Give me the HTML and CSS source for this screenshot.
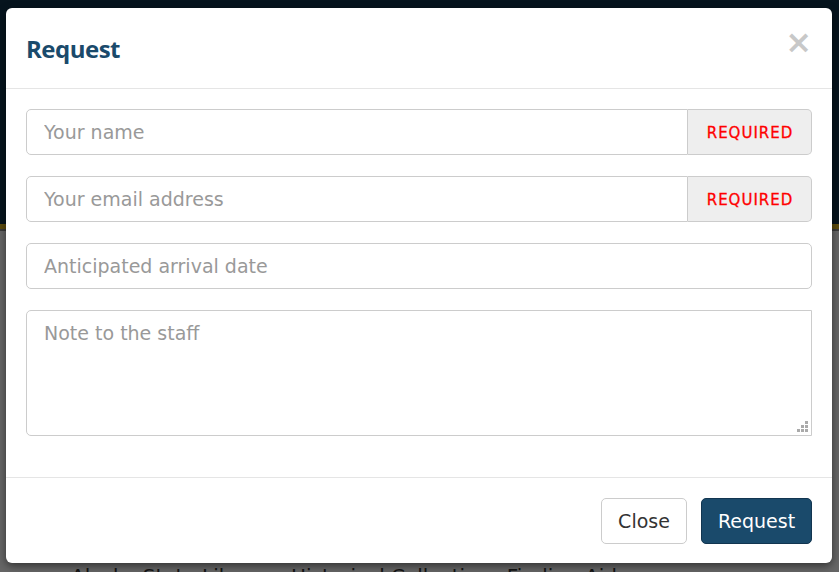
FILE: index.html
```html
<!DOCTYPE html>
<html lang="en">
<head>
<meta charset="utf-8">
<title>Request</title>
<link rel="stylesheet" href="styles.css">
</head>
<body>
<div class="page">
  <div class="page-header"></div>
  <div class="page-band"></div>
  <div class="page-content">
    <div class="page-title">Alaska State Library &nbsp; Historical Collections Finding Aids</div>
  </div>
</div>

<div class="modal">
  <div class="modal-header">
    <h4 class="modal-title">Request</h4>
    <button class="close" type="button" aria-label="Close">&times;</button>
  </div>
  <div class="modal-body">
    <div class="input-group">
      <input class="form-control" type="text" placeholder="Your name">
      <span class="addon">REQUIRED</span>
    </div>
    <div class="input-group">
      <input class="form-control" type="email" placeholder="Your email address">
      <span class="addon">REQUIRED</span>
    </div>
    <div class="input-group">
      <input class="form-control" type="text" placeholder="Anticipated arrival date">
    </div>
    <div class="input-group textarea-wrap">
      <textarea class="form-control note" placeholder="Note to the staff"></textarea>
      <svg class="grip" width="12" height="12" viewBox="0 0 12 12" aria-hidden="true">
        <rect x="8" y="0" width="3" height="3" fill="#aaa"/>
        <rect x="4" y="4" width="3" height="3" fill="#aaa"/>
        <rect x="8" y="4" width="3" height="3" fill="#aaa"/>
        <rect x="0" y="8" width="3" height="3" fill="#aaa"/>
        <rect x="4" y="8" width="3" height="3" fill="#aaa"/>
        <rect x="8" y="8" width="3" height="3" fill="#aaa"/>
      </svg>
    </div>
  </div>
  <div class="modal-footer">
    <button class="btn btn-default" type="button">Close</button>
    <button class="btn btn-primary" type="button">Request</button>
  </div>
</div>
</body>
</html>
```

FILE: styles.css
```css
html, body {
  margin: 0;
  padding: 0;
  height: 100%;
  overflow: hidden;
}

body {
  font-family: "DejaVu Sans", Verdana, sans-serif;
  background: #666666;
}

.page {
  display: flex;
  flex-direction: column;
  height: 100%;
}

.page-header {
  height: 224px;
  background: #06141e;
}

.page-band {
  height: 5px;
  background: #5c4c0e;
  border-bottom: 2px solid #3a3a3a;
}

.page-content {
  flex: 1;
  background: #666666;
  position: relative;
}

.page-title {
  position: absolute;
  left: 71px;
  top: 333px;
  font-size: 20px;
  color: #141414;
  white-space: nowrap;
}

.modal {
  position: absolute;
  left: 6px;
  top: 8px;
  width: 826px;
  height: 555px;
  background: #ffffff;
  border-radius: 6px;
  box-shadow: 0 3px 9px rgba(0, 0, 0, 0.5);
  display: flex;
  flex-direction: column;
  box-sizing: border-box;
}

.modal-header {
  height: 81px;
  box-sizing: border-box;
  border-bottom: 1px solid #e5e5e5;
  display: flex;
  align-items: center;
  justify-content: space-between;
  padding: 0 20px 0 20px;
}

.modal-title {
  margin: 0;
  font-family: "Open Sans", sans-serif;
  font-weight: 700;
  font-size: 24px;
  letter-spacing: -0.5px;
  color: #1a4a6b;
  line-height: 1;
  padding-top: 2px;
}

.close {
  border: 0;
  background: transparent;
  padding: 0;
  margin: 0 0 12px 0;
  font-family: "DejaVu Sans", sans-serif;
  font-size: 32px;
  font-weight: 700;
  line-height: 1;
  color: #c8c8c8;
  cursor: pointer;
}

.modal-body {
  padding: 20px 20px 0 20px;
  flex: 1;
}

.input-group {
  display: flex;
  margin-bottom: 21px;
}

.form-control {
  flex: 1;
  height: 46px;
  box-sizing: border-box;
  border: 1px solid #cccccc;
  border-radius: 5px;
  padding: 0 17px;
  font-family: "DejaVu Sans", Verdana, sans-serif;
  font-size: 19px;
  color: #555555;
  background: #ffffff;
  outline: none;
  min-width: 0;
}

.form-control::placeholder {
  color: #999999;
}

.input-group .form-control:not(:last-child) {
  border-top-right-radius: 0;
  border-bottom-right-radius: 0;
}

.addon {
  width: 124px;
  height: 46px;
  box-sizing: border-box;
  border: 1px solid #cccccc;
  border-left: 0;
  border-radius: 0 5px 5px 0;
  background: #eeeeee;
  color: #ff0000;
  font-size: 15px;
  letter-spacing: 1px;
  display: flex;
  align-items: center;
  justify-content: center;
  padding-left: 1px;
  padding-top: 1px;
  -webkit-text-stroke: 0.3px #ff0000;
}

.textarea-wrap {
  position: relative;
}

.note {
  height: 126px;
  resize: none;
  padding: 10px 17px;
  line-height: 24px;
}

.grip {
  position: absolute;
  right: 3px;
  bottom: 3px;
}

.modal-footer {
  border-top: 1px solid #e5e5e5;
  padding: 20px 20px 19px 20px;
  display: flex;
  justify-content: flex-end;
  gap: 14px;
}

.btn {
  height: 46px;
  box-sizing: border-box;
  border-radius: 5px;
  font-family: "DejaVu Sans", Verdana, sans-serif;
  font-size: 19px;
  padding: 0 10px;
  cursor: pointer;
}

.btn-default {
  width: 86px;
  background: #ffffff;
  border: 1px solid #cccccc;
  color: #333333;
}

.btn-primary {
  width: 111px;
  background: #1a4a6b;
  border: 1px solid #123550;
  color: #ffffff;
}
```
